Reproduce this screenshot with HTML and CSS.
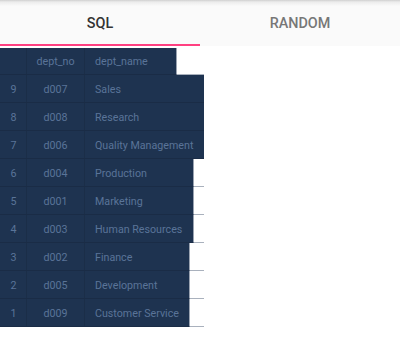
FILE: index.html
```html
<!DOCTYPE html>
<html>
<head>
<meta charset="utf-8">
<link rel="stylesheet" href="styles.css">
</head>
<body>
<div class="tabs">
  <div class="tab active">SQL</div>
  <div class="tab">RANDOM</div>
</div>
<div class="table">
  <div class="row head">
    <div class="cells w176"><div class="c idx"></div><div class="c no">dept_no</div><div class="c name">dept_name</div></div>
    <div class="rest"></div>
  </div>
  <div class="row"><div class="cells w204"><div class="c idx">9</div><div class="c no">d007</div><div class="c name">Sales</div></div></div>
  <div class="row"><div class="cells w204"><div class="c idx">8</div><div class="c no">d008</div><div class="c name">Research</div></div></div>
  <div class="row"><div class="cells w204"><div class="c idx">7</div><div class="c no">d006</div><div class="c name">Quality Management</div></div></div>
  <div class="row"><div class="cells w193"><div class="c idx">6</div><div class="c no">d004</div><div class="c name">Production</div></div><div class="rest"></div></div>
  <div class="row"><div class="cells w193"><div class="c idx">5</div><div class="c no">d001</div><div class="c name">Marketing</div></div><div class="rest"></div></div>
  <div class="row"><div class="cells w193"><div class="c idx">4</div><div class="c no">d003</div><div class="c name">Human Resources</div></div><div class="rest"></div></div>
  <div class="row"><div class="cells w189"><div class="c idx">3</div><div class="c no">d002</div><div class="c name">Finance</div></div><div class="rest"></div></div>
  <div class="row"><div class="cells w189"><div class="c idx">2</div><div class="c no">d005</div><div class="c name">Development</div></div><div class="rest"></div></div>
  <div class="row"><div class="cells w189"><div class="c idx">1</div><div class="c no">d009</div><div class="c name">Customer Service</div></div><div class="rest"></div></div>
</div>
</body>
</html>
```

FILE: styles.css
```css
html, body {
  margin: 0;
  padding: 0;
  background: #ffffff;
  font-family: Roboto, "Liberation Sans", sans-serif;
}
.tabs {
  display: flex;
  height: 46px;
  background: #fafafa;
  background-image: linear-gradient(to bottom, #cfcfcf 0px, #ececec 2px, #fafafa 6px);
  box-sizing: border-box;
}
.tab {
  flex: 1;
  display: flex;
  align-items: center;
  justify-content: center;
  font-size: 14.4px;
  font-weight: 500;
  color: #777777;
  padding-top: 3px;
  box-sizing: border-box;
  border-bottom: 2px solid transparent;
}
.tab.active {
  color: #333333;
  border-bottom-color: #ff4081;
}
.table {
  width: 204px;
  padding-top: 2px;
}
.row {
  display: flex;
  height: 28px;
}
.cells {
  display: flex;
  height: 28px;
  background: #1e3350;
  box-sizing: border-box;
  border-bottom: 1px solid #1a2c46;
}
.w176 { width: 177px; border-right: 1px solid #9aa3b1; }
.w204 { width: 204px; }
.w193 { width: 194px; border-right: 1px solid #9aa3b1; }
.w189 { width: 190px; border-right: 1px solid #9aa3b1; }
.head .cells { height: 27px; }
.head { height: 27px; }
.rest {
  flex: 1;
  border-bottom: 1px solid #a9b1bd;
  box-sizing: border-box;
}
.c {
  display: flex;
  align-items: center;
  font-size: 10.7px;
  color: #5a7498;
  box-sizing: border-box;
  white-space: nowrap;
  padding-top: 1px;
}
.idx {
  width: 27px;
  justify-content: center;
  border-right: 1px solid #1b2e48;
  padding-left: 1px;
}
.no {
  width: 58px;
  justify-content: center;
  border-right: 1px solid #1b2e48;
}
.name {
  flex: 1;
  padding-left: 10px;
}
```
